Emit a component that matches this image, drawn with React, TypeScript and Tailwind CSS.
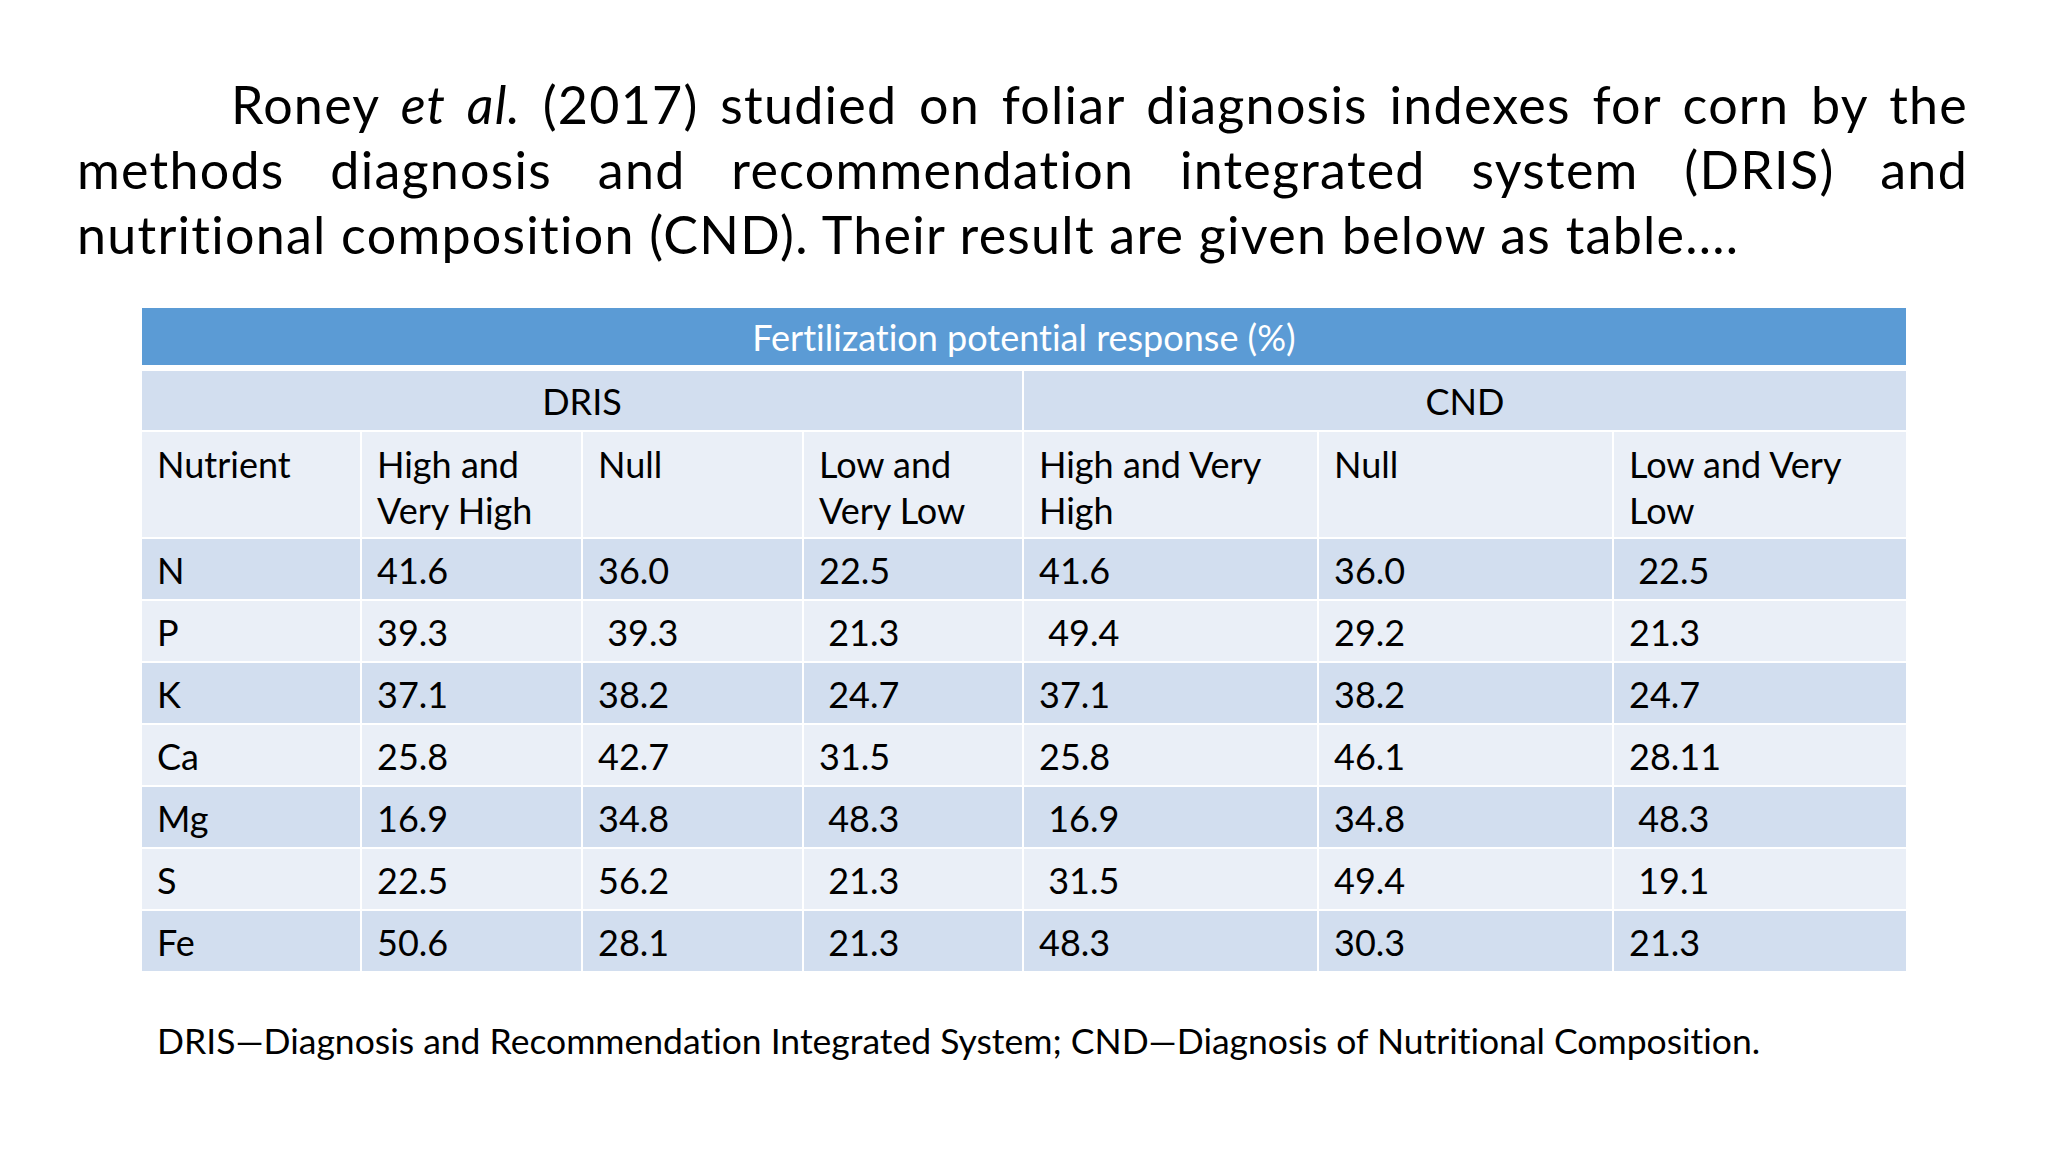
import React from "react";

const cols = "grid-cols-[218px_219px_219px_218px_293px_293px_292px]";

const rows: string[][] = [
  ["N", "41.6", "36.0", "22.5", "41.6", "36.0", " 22.5"],
  ["P", "39.3", " 39.3", " 21.3", " 49.4", "29.2", "21.3"],
  ["K", "37.1", "38.2", " 24.7", "37.1", "38.2", "24.7"],
  ["Ca", "25.8", "42.7", "31.5", "25.8", "46.1", "28.11"],
  ["Mg", "16.9", "34.8", " 48.3", " 16.9", "34.8", " 48.3"],
  ["S", "22.5", "56.2", " 21.3", " 31.5", "49.4", " 19.1"],
  ["Fe", "50.6", "28.1", " 21.3", "48.3", "30.3", "21.3"],
];

const headers = [
  "Nutrient",
  "High and\nVery High",
  "Null",
  "Low and\nVery Low",
  "High and Very\nHigh",
  "Null",
  "Low and Very\nLow",
];

export default function App() {
  return (
    <div
      className="w-[2048px] h-[1152px] bg-white text-black overflow-hidden relative [font-variant-ligatures:none]"
      style={{ fontFamily: "Lato, 'Open Sans', sans-serif" }}
    >
      <div className="pt-[72px] pl-[77px] w-[1968px] text-[52px] leading-[65px] tracking-[1.25px]">
        <div className="pl-[154px] text-justify [text-align-last:justify]">
          Roney <i>et al.</i> (2017) studied on foliar diagnosis indexes for corn by the
        </div>
        <div className="text-justify [text-align-last:justify]">
          methods diagnosis and recommendation integrated system (DRIS) and
        </div>
        <div>nutritional composition (CND). Their result are given below as table....</div>
      </div>

      <div className="mt-[41px] ml-[142px] w-[1764px] flex flex-col text-[36px] leading-[46px]">
        <div className="h-[57px] bg-[#5B9BD5] text-white flex items-center justify-center">
          Fertilization potential response (%)
        </div>
        <div className="mt-[6px] h-[59px] grid grid-cols-[880px_882px] gap-[2px]">
          <div className="bg-[#D2DEEF] flex items-center justify-center">DRIS</div>
          <div className="bg-[#D2DEEF] flex items-center justify-center">CND</div>
        </div>
        <div className={`mt-[2px] h-[105px] grid ${cols} gap-[2px]`}>
          {headers.map((h, i) => (
            <div key={i} className="bg-[#EAEFF7] pl-[15px] pt-[9px] whitespace-pre-line">
              {h}
            </div>
          ))}
        </div>
        {rows.map((r, ri) => (
          <div key={ri} className={`mt-[2px] h-[60px] grid ${cols} gap-[2px]`}>
            {r.map((c, ci) => (
              <div
                key={ci}
                className={`${ri % 2 === 0 ? "bg-[#D2DEEF]" : "bg-[#EAEFF7]"} pl-[15px] pt-[8px] whitespace-pre`}
              >
                {c}
              </div>
            ))}
          </div>
        ))}
      </div>

      <div className="mt-[50px] ml-[157px] text-[35.5px] leading-[40px]">
        DRIS—Diagnosis and Recommendation Integrated System; CND—Diagnosis of Nutritional Composition.
      </div>
    </div>
  );
}
